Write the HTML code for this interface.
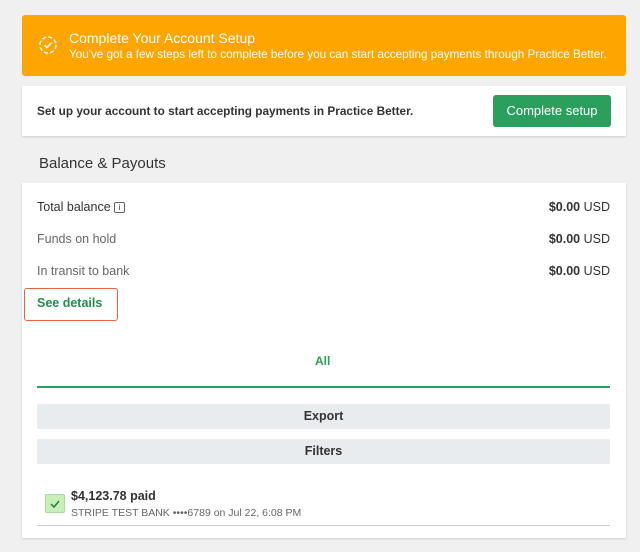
<!DOCTYPE html>
<html><head><style>
body{margin:0;width:640px;height:552px;background:#f0f0f0;font-family:"Liberation Sans",sans-serif;position:relative;overflow:hidden}
.a{position:absolute}
</style></head><body>
<div class="a" style="left:22px;top:15px;width:604px;height:61px;background:#fea500;border-radius:3px;color:#fff">
  <svg class="a" style="left:16px;top:20px" width="20" height="20" viewBox="0 0 20 20"><circle cx="10" cy="10" r="8" fill="none" stroke="#fff" stroke-width="1.6" stroke-dasharray="4 2.3"/><path d="M6.5 10.2l2.4 2.3 4.6-4.8" fill="none" stroke="#fff" stroke-width="1.6"/></svg>
  <div class="a" style="left:47px;top:15px;font-size:14px">Complete Your Account Setup</div>
  <div class="a" style="left:47px;top:33px;font-size:11.7px;white-space:nowrap">You've got a few steps left to complete before you can start accepting payments through Practice Better.</div>
</div>
<div class="a" style="left:22px;top:86px;width:604px;height:50px;background:#fff;box-shadow:0 1px 2px rgba(0,0,0,.15)">
  <div class="a" style="left:15px;top:18px;font-size:11.8px;font-weight:bold;color:#333">Set up your account to start accepting payments in Practice Better.</div>
  <div class="a" style="left:471px;top:9px;width:118px;height:32px;background:#2a9f5e;border-radius:3px;color:#fff;font-size:13px;line-height:32px;text-align:center">Complete setup</div>
</div>
<div class="a" style="left:39px;top:155px;font-size:15px;color:#333">Balance &amp; Payouts</div>
<div class="a" style="left:22px;top:183px;width:604px;height:355px;background:#fff;box-shadow:0 1px 2px rgba(0,0,0,.15)">
  <div class="a" style="left:15px;top:17px;font-size:12.5px;color:#333">Total balance <span style="display:inline-block;width:9px;height:9px;border:1px solid #666;border-radius:2px;font-size:8px;line-height:9px;text-align:center;vertical-align:1px">i</span></div>
  <div class="a" style="left:15px;top:49px;font-size:12.5px;color:#666">Funds on hold</div>
  <div class="a" style="left:15px;top:81px;font-size:12.5px;color:#666">In transit to bank</div>
  <div class="a" style="right:16px;top:17px;font-size:12.5px;color:#333"><b>$0.00</b> USD</div>
  <div class="a" style="right:16px;top:49px;font-size:12.5px;color:#333"><b>$0.00</b> USD</div>
  <div class="a" style="right:16px;top:81px;font-size:12.5px;color:#333"><b>$0.00</b> USD</div>
  <div class="a" style="left:2px;top:105px;width:92px;height:31px;border:1.5px solid #f0603f;border-radius:3px"></div>
  <div class="a" style="left:15px;top:113px;font-size:12.5px;font-weight:bold;color:#1e8f4f">See details</div>
  <div class="a" style="left:293px;top:171px;font-size:12px;font-weight:bold;color:#2a9f5e">All</div>
  <div class="a" style="left:15px;top:203px;width:573px;height:2px;background:#2a9f5e"></div>
  <div class="a" style="left:15px;top:221px;width:573px;height:25px;background:#e9ecef;border-radius:2px;font-size:12.5px;font-weight:bold;color:#333;text-align:center;line-height:25px">Export</div>
  <div class="a" style="left:15px;top:256px;width:573px;height:25px;background:#e9ecef;border-radius:2px;font-size:12.5px;font-weight:bold;color:#333;text-align:center;line-height:25px">Filters</div>
  <div class="a" style="left:23px;top:311px;width:18px;height:17px;background:#c7f0b8;border:1px solid #a6d99a;border-radius:2px"><svg width="18" height="17"><path d="M5 9l3 3 5-6" fill="none" stroke="#2a7a3a" stroke-width="1.5"/></svg></div>
  <div class="a" style="left:49px;top:306px;font-size:12.5px;font-weight:bold;color:#333">$4,123.78 paid</div>
  <div class="a" style="left:49px;top:324px;font-size:10.5px;color:#666">STRIPE TEST BANK ••••6789 on Jul 22, 6:08 PM</div>
  <div class="a" style="left:15px;top:342px;width:573px;height:1px;background:#ccc"></div>
</div>
</body></html>
